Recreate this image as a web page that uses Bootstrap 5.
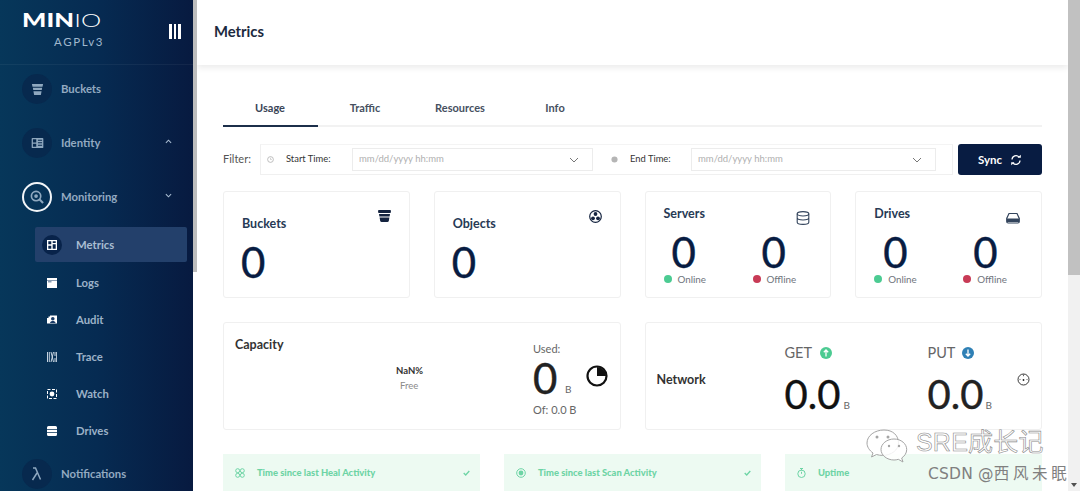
<!doctype html>
<html lang="en">
<head>
<meta charset="utf-8">
<title>MinIO Metrics</title>
<link href="https://cdn.jsdelivr.net/npm/bootstrap@5.3.0/dist/css/bootstrap.min.css" rel="stylesheet">
<style>
html,body{height:100%;overflow:hidden;background:#fff}
body{font-family:Lato,"Noto Sans",sans-serif;color:#081c42;-webkit-font-smoothing:antialiased}
.app-shell{width:1080px;height:491px;position:relative;overflow:hidden}
.side-pane{width:193px;flex:none;height:491px;background:linear-gradient(90deg,#06375a 0%,#062b52 50%,#071a40 100%);color:#9cb2c8;overflow:hidden}
.side-thumb{width:4px;flex:none;height:491px;background:linear-gradient(#bdbdbd 0 272px,#fff 272px)}
.brand-box{height:65px;position:relative;border-bottom:1px solid rgba(255,255,255,.05)}
.brand-word{position:absolute;left:22px;top:7px;font-size:18px;line-height:26px;color:#fff;font-weight:900;letter-spacing:.1px;transform:scaleX(1.42);transform-origin:left}
.brand-word span{font-weight:300}
.brand-sub{position:absolute;left:54px;top:34px;font-size:11.5px;line-height:16px;letter-spacing:1.6px;color:#a0b8ce}
.menu-bars{position:absolute;left:169px;top:24px;width:12px;height:15px;display:flex;gap:2px}
.menu-bars i{flex:1;background:#fff}
.menu-row{height:48px;margin-bottom:6px;padding-left:22px;font-size:11.3px;font-weight:700;position:relative;color:#93aac1}
.menu-disc{width:30px;height:30px;border-radius:50%;background:#07294e;margin-right:9px;flex:none}
.menu-disc.is-open{border:2px solid #f2f5f8;background:transparent}
.menu-chev{position:absolute;left:165px;top:19px}
.sub-list{margin-top:1px}
.sub-row{height:37px;padding:1px 0 0 47px;font-size:11.3px;font-weight:700;color:#9cb2c8}
.sub-row svg{margin-right:19px;flex:none}
.sub-active{height:35px;margin:0 6px 2px 35px;padding:1px 0 0 7px;background:#23406b;border-radius:2px;color:#a9bdd2;font-size:11.3px;font-weight:700}
.sub-active .sub-disc{width:20px;height:20px;border-radius:50%;background:#08234a;margin-right:14px}
.last-row{height:50px;margin:0}
.main-pane{flex:1;min-width:0;height:491px;overflow:hidden}
.top-strip{height:65px;padding:0 0 2px 17px;font-size:14.8px;font-weight:700;color:#1c2a3e;box-shadow:0 3px 6px rgba(0,0,0,.08)}
.content-box{padding:25px 26px 0;width:871px}
.tab-line{height:37px;border-bottom:2px solid #f2f2f2;margin-bottom:17px}
.tab-cell{width:95px;height:37px;text-align:center;font-size:11px;font-weight:700;line-height:35px;color:#46505f;padding-right:1px}
.tab-cell.is-on{border-bottom:2px solid #1c2f4a;color:#3a4557}
.filter-line{height:31px;margin-bottom:16px}
.filter-cap{width:37px;font-size:11px;color:#555}
.filter-box{width:693px;height:31px;border:1px solid #f0f0f0;border-top-color:#f4f4f4;font-size:9.4px;color:#333}
.time-start{width:91px;padding-left:6px}
.time-end{width:98px;padding-left:18px}
.time-field{height:23px;border:1px solid #ececec;padding:0 5px 0 6px;color:#b0b0b0;font-size:9.5px}
.field-a{width:241px}.field-b{width:245px}
.sync-btn{width:84px;height:31px;margin-left:5px;background:#081c42;color:#fff;font-size:11.5px;font-weight:700;border-radius:3px;border:0;padding:0}
.stat-tile{height:107px;border:1px solid #f0f0f0;border-radius:3px;position:relative;background:#fff}
.tile-tall{height:108px}
.tile-name{position:absolute;left:18px;top:24px;font-size:12.5px;font-weight:700;line-height:16px;color:#273a55}
.tile-mark{position:absolute}
.big-num{position:absolute;font-size:42px;line-height:40px;color:#081c42;-webkit-text-stroke:.4px currentColor}
.big-wide{font-size:40px}
.dot-key{position:absolute;font-size:9.8px;color:#6f747c;line-height:12px;white-space:nowrap;display:flex;align-items:center;gap:6px}
.dot-key i{width:8px;height:8px;border-radius:50%;display:block}
.dot-on{background:#4ccb92}.dot-off{background:#c83b56}
.plain-abs{position:absolute;line-height:1;white-space:nowrap}
.status-tile{height:60px;background:#edfaf2;color:#6dd4a5;font-size:9.4px;font-weight:700;padding:0 10px 22px 12px}
.status-tile svg{flex:none}
.status-tile b{margin-left:12px;flex:1}
.fake-scroll{width:12px;flex:none;height:491px;background:#f1f1f1;position:relative}
.fake-scroll::before{content:"";position:absolute;left:0;top:0;right:0;height:275px;background:#c1c1c1}
.fake-scroll::after{content:"";position:absolute;left:3px;bottom:4px;border:3px solid transparent;border-top:4px solid #505050;border-bottom:0}
.water-one{position:absolute;left:916px;top:426px;font-size:25px;line-height:32px;color:#fff;letter-spacing:.2px;font-family:"Liberation Sans","Noto Sans CJK SC",sans-serif;-webkit-text-stroke:.6px #8a8a8a;white-space:nowrap}
.water-two{position:absolute;left:928px;top:464px;font-size:15.5px;line-height:20px;color:#808080;font-family:"DejaVu Sans","Noto Sans CJK SC",sans-serif;white-space:nowrap;letter-spacing:.2px}
.water-two span{letter-spacing:3.6px}
.wechat-mark{position:absolute;left:865px;top:428px}
</style>
</head>
<body>
<div class="app-shell d-flex">
  <aside class="side-pane">
    <div class="brand-box">
      <div class="brand-word">MIN<span>IO</span></div>
      <div class="brand-sub">AGPLv3</div>
      <div class="menu-bars"><i></i><i></i><i></i></div>
    </div>
    <div class="menu-row d-flex align-items-center">
      <div class="menu-disc d-flex align-items-center justify-content-center"><svg width="13" height="13" viewBox="0 0 14 14"><path fill="#8fa8bf" d="M1 1h12l-.6 3H1.600zM2 5.200h10l-.4 2.400H2.400zM2.600 8.800h8.800L10.600 13H3.400z"/></svg></div>Buckets
    </div>
    <div class="menu-row d-flex align-items-center">
      <div class="menu-disc d-flex align-items-center justify-content-center"><svg width="13" height="10" viewBox="0 0 14 12"><path fill="#8fa8bf" d="M0 1a1 1 0 0 1 1-1h12a1 1 0 0 1 1 1v10a1 1 0 0 1-1 1H1a1 1 0 0 1-1-1zm1.500.500v4h4v-4zm0 5.500v3.500h4V7zm6-5v1.300H12.500V2zm0 3v1.300H12.500V5zm0 3v1.300H12.500V8z"/></svg></div>Identity
      <svg class="menu-chev" width="7" height="7" viewBox="0 0 8 8"><path d="M1 5.500 4 2.500l3 3" fill="none" stroke="#a9bdd2" stroke-width="1.200"/></svg>
    </div>
    <div class="menu-row d-flex align-items-center">
      <div class="menu-disc is-open d-flex align-items-center justify-content-center"><svg width="14" height="14" viewBox="0 0 15 15"><circle cx="6.500" cy="6.500" r="5" fill="none" stroke="#8fa8bf" stroke-width="1.800"/><path d="M10 10l4 4" stroke="#8fa8bf" stroke-width="2.200"/><circle cx="6.500" cy="6.500" r="2" fill="#8fa8bf"/></svg></div>Monitoring
      <svg class="menu-chev" width="7" height="7" viewBox="0 0 8 8"><path d="M1 2.500 4 5.500l3-3" fill="none" stroke="#a9bdd2" stroke-width="1.200"/></svg>
    </div>
    <div class="sub-list">
      <div class="sub-active d-flex align-items-center">
        <div class="sub-disc d-flex align-items-center justify-content-center"><svg width="10" height="10" viewBox="0 0 10 10"><path fill="#fff" d="M0 0h10v10H0zm1.300 1.300v3h3v-3zm4.400 0v1.700h3V1.300zm0 3v4.400h3V4.300zm-4.400 1.400v3h3v-3z"/></svg></div>Metrics
      </div>
      <div class="sub-row d-flex align-items-center"><svg width="10" height="10" viewBox="0 0 10 10"><path fill="#fff" d="M0 0h10v10H0z"/><path fill="#173a66" d="M0 2h10v.6H0zM1 3.500h3.500v.8H1z"/></svg>Logs</div>
      <div class="sub-row d-flex align-items-center"><svg width="10" height="10" viewBox="0 0 10 10"><path fill="#fff" d="M0 3h1.500V1.500H3V.5h7v8H0z"/><circle cx="5.800" cy="3.800" r="1.800" fill="#173a66"/><path d="M3 8c.3-1.500 1.500-2 2.800-2s2.500.5 2.800 2z" fill="#173a66"/></svg>Audit</div>
      <div class="sub-row d-flex align-items-center"><svg width="10" height="10" viewBox="0 0 10 10"><path stroke="#dbe5ef" stroke-width=".9" d="M.5 0v10M2.300 0v10M4 0l2.500 10M6.500 0 4 10M8 0v4M8 6v4M9.600 0v10"/></svg>Trace</div>
      <div class="sub-row d-flex align-items-center"><svg width="10" height="10" viewBox="0 0 10 10"><path fill="none" stroke="#fff" stroke-width="1" stroke-dasharray="3 1.500" d="M.5.500h9v9h-9z"/><circle cx="5" cy="5" r="2.400" fill="#fff"/></svg>Watch</div>
      <div class="sub-row d-flex align-items-center"><svg width="10" height="10" viewBox="0 0 10 10"><path fill="#fff" d="M1.500 0h7A1.500 1.500 0 0 1 10 1.500V3H0V1.500A1.500 1.500 0 0 1 1.500 0zM0 3.800h10v2.400H0zM0 7h10v1.500A1.500 1.500 0 0 1 8.500 10h-7A1.500 1.500 0 0 1 0 8.500z"/></svg>Drives</div>
    </div>
    <div class="menu-row last-row d-flex align-items-center">
      <div class="menu-disc d-flex align-items-center justify-content-center"><svg width="14" height="14" viewBox="0 0 14 14"><path d="M3 1h2.500l5 11.500M7 6 2.500 13" fill="none" stroke="#8fa8c0" stroke-width="1.500"/></svg></div>Notifications
    </div>
  </aside>
  <div class="side-thumb"></div>
  <main class="main-pane">
    <div class="top-strip d-flex align-items-center">Metrics</div>
    <div class="content-box">
      <div class="tab-line d-flex">
        <div class="tab-cell is-on">Usage</div>
        <div class="tab-cell">Traffic</div>
        <div class="tab-cell">Resources</div>
        <div class="tab-cell">Info</div>
      </div>
      <div class="filter-line d-flex align-items-center">
        <div class="filter-cap">Filter:</div>
        <div class="filter-box d-flex align-items-center">
          <div class="time-start d-flex align-items-center gap-2"><svg width="7" height="7" viewBox="0 0 8 8"><circle cx="4" cy="4" r="3.300" fill="none" stroke="#b5b5b5"/><path d="M4 2v2h1.500" fill="none" stroke="#b5b5b5" stroke-width=".7"/></svg><span class="ms-1">Start Time:</span></div>
          <div class="time-field field-a d-flex align-items-center justify-content-between">mm/dd/yyyy hh:mm<svg class="me-2" width="10" height="6" viewBox="0 0 10 6"><path d="M1 1l4 4 4-4" fill="none" stroke="#777" stroke-width="1"/></svg></div>
          <div class="time-end d-flex align-items-center gap-2"><svg width="7" height="7" viewBox="0 0 8 8"><circle cx="4" cy="4" r="3.500" fill="#b5b5b5"/></svg><span class="ms-1">End Time:</span></div>
          <div class="time-field field-b d-flex align-items-center justify-content-between">mm/dd/yyyy hh:mm<svg class="me-2" width="10" height="6" viewBox="0 0 10 6"><path d="M1 1l4 4 4-4" fill="none" stroke="#777" stroke-width="1"/></svg></div>
        </div>
        <button class="sync-btn btn d-flex align-items-center justify-content-center gap-2" type="button">Sync <svg width="12" height="12" viewBox="0 0 12 12"><path d="M2 5.500a4 4 0 0 1 7-2.500M10 6.500a4 4 0 0 1-7 2.500" fill="none" stroke="#fff" stroke-width="1.200"/><path d="M7.500 3.800h3.300V.8zM4.500 8.200H1.200v3z" fill="#fff"/></svg></button>
      </div>
      <div class="row g-4">
        <div class="col-3"><div class="stat-tile card">
          <div class="tile-name">Buckets</div>
          <svg class="tile-mark" style="left:154px;top:18px" width="13" height="13" viewBox="0 0 13 13"><path fill="#14233f" d="M0 1a1 1 0 0 1 1-1h11a1 1 0 0 1 1 1l-.4 2H.4zM1 4h11l-.4 2.500H1.400zM1.600 7.500h9.800L10.800 11a1.500 1.500 0 0 1-1.500 1H3.700a1.500 1.500 0 0 1-1.500-1z"/></svg>
          <div class="big-num" style="left:17px;top:50px">0</div>
        </div></div>
        <div class="col-3"><div class="stat-tile card">
          <div class="tile-name">Objects</div>
          <svg class="tile-mark" style="left:154px;top:18px" width="13" height="13" viewBox="0 0 13 13"><circle cx="6.500" cy="6.500" r="5.800" fill="none" stroke="#14233f" stroke-width="1.200"/><circle cx="6.500" cy="4" r="1.900" fill="#14233f"/><circle cx="4" cy="8.300" r="1.900" fill="#14233f"/><circle cx="9" cy="8.300" r="1.900" fill="#14233f"/></svg>
          <div class="big-num" style="left:17px;top:50px">0</div>
        </div></div>
        <div class="col-3"><div class="stat-tile card">
          <div class="tile-name" style="top:14px">Servers</div>
          <svg class="tile-mark" style="left:150px;top:19px" width="14" height="14" viewBox="0 0 14 14"><ellipse cx="7" cy="2.800" rx="5.800" ry="2.200" fill="none" stroke="#33445c" stroke-width="1.100"/><path d="M1.200 2.800v8.400c0 1.200 2.600 2.200 5.800 2.200s5.800-1 5.800-2.200V2.800M1.200 6.800c0 1.200 2.600 2.200 5.800 2.200s5.800-1 5.800-2.200" fill="none" stroke="#33445c" stroke-width="1.100"/></svg>
          <div class="big-num" style="left:26px;top:40px">0</div>
          <div class="big-num" style="left:116px;top:40px">0</div>
          <div class="dot-key" style="left:18px;top:81px"><i class="dot-on"></i>Online</div>
          <div class="dot-key" style="left:107px;top:81px"><i class="dot-off"></i>Offline</div>
        </div></div>
        <div class="col-3"><div class="stat-tile card">
          <div class="tile-name" style="top:14px">Drives</div>
          <svg class="tile-mark" style="left:150px;top:20px" width="14" height="12" viewBox="0 0 14 12"><path d="M3 1.500h8l2.300 5v3a1.500 1.500 0 0 1-1.500 1.500H2.200A1.500 1.500 0 0 1 .7 9.500v-3z" fill="none" stroke="#33445c" stroke-width="1.200"/><path d="M1 6.500h12v3.500H1z" fill="#33445c"/></svg>
          <div class="big-num" style="left:27px;top:40px">0</div>
          <div class="big-num" style="left:117px;top:40px">0</div>
          <div class="dot-key" style="left:18px;top:81px"><i class="dot-on"></i>Online</div>
          <div class="dot-key" style="left:107px;top:81px"><i class="dot-off"></i>Offline</div>
        </div></div>
        <div class="col-6"><div class="stat-tile tile-tall card">
          <div class="tile-name" style="left:11px;top:14px;color:#333">Capacity</div>
          <div class="plain-abs" style="left:172px;top:43px;font-size:9.500px;font-weight:700;color:#333">NaN%</div>
          <div class="plain-abs" style="left:176px;top:58px;font-size:9.500px;color:#8a8a8a">Free</div>
          <div class="plain-abs" style="left:309px;top:20px;font-size:11px;color:#666">Used:</div>
          <div class="big-num" style="left:309px;top:35px;color:#222">0</div>
          <div class="plain-abs" style="left:341px;top:61px;font-size:10px;color:#666">B</div>
          <div class="plain-abs" style="left:309px;top:81px;font-size:11px;color:#666">Of: 0.0 B</div>
          <svg class="tile-mark" style="left:362px;top:42px" width="22" height="22" viewBox="0 0 22 22"><circle cx="11" cy="11" r="9.500" fill="none" stroke="#111" stroke-width="2.200"/><path d="M11 11V2a9 9 0 0 1 9 9z" fill="#111"/></svg>
        </div></div>
        <div class="col-6"><div class="stat-tile tile-tall card">
          <div class="tile-name" style="left:11px;top:49px;color:#333">Network</div>
          <div class="plain-abs" style="left:139px;top:23px;font-size:14.500px;color:#666">GET</div>
          <svg class="tile-mark" style="left:174px;top:24px" width="12" height="12" viewBox="0 0 12 12"><circle cx="6" cy="6" r="6" fill="#4ccb92"/><path d="M6 9.500V3M3.800 5.200 6 3l2.200 2.200" fill="none" stroke="#fff" stroke-width="1.300"/></svg>
          <div class="plain-abs" style="left:282px;top:23px;font-size:14.500px;color:#666">PUT</div>
          <svg class="tile-mark" style="left:316px;top:24px" width="12" height="12" viewBox="0 0 12 12"><circle cx="6" cy="6" r="6" fill="#2f80b5"/><path d="M6 2.500V9M3.800 6.800 6 9l2.200-2.200" fill="none" stroke="#fff" stroke-width="1.300"/></svg>
          <div class="big-num big-wide" style="left:139px;top:51px;color:#111">0.0</div>
          <div class="plain-abs" style="left:198px;top:77px;font-size:10px;color:#666">B</div>
          <div class="big-num big-wide" style="left:282px;top:51px;color:#222">0.0</div>
          <div class="plain-abs" style="left:340px;top:77px;font-size:10px;color:#666">B</div>
          <svg class="tile-mark" style="left:371px;top:50px" width="13" height="13" viewBox="0 0 13 13"><circle cx="6.500" cy="6.500" r="5.500" fill="none" stroke="#222" stroke-width=".9"/><circle cx="6.500" cy="7" r=".9" fill="#222"/><path d="M6.500 1.500v1.700M2.500 6.500h1M9.500 6.500h1" stroke="#222" stroke-width=".7"/></svg>
        </div></div>
        <div class="col-4"><div class="status-tile d-flex align-items-center">
          <svg width="10" height="10" viewBox="0 0 10 10"><g fill="none" stroke="#6dd4a5" stroke-width="1"><circle cx="2.700" cy="2.700" r="2"/><circle cx="7.300" cy="2.700" r="2"/><circle cx="2.700" cy="7.300" r="2"/><circle cx="7.300" cy="7.300" r="2"/></g></svg>
          <b>Time since last Heal Activity</b>
          <svg width="7" height="6" viewBox="0 0 7 6"><path d="M.7 3l2 2L6.300 1" fill="none" stroke="#6dd4a5" stroke-width="1.300"/></svg>
        </div></div>
        <div class="col-4"><div class="status-tile d-flex align-items-center">
          <svg width="10" height="10" viewBox="0 0 10 10"><circle cx="5" cy="5" r="4.300" fill="none" stroke="#6dd4a5"/><circle cx="5" cy="5" r="2.400" fill="#6dd4a5"/></svg>
          <b>Time since last Scan Activity</b>
          <svg width="7" height="6" viewBox="0 0 7 6"><path d="M.7 3l2 2L6.300 1" fill="none" stroke="#6dd4a5" stroke-width="1.300"/></svg>
        </div></div>
        <div class="col-4"><div class="status-tile d-flex align-items-center">
          <svg width="9" height="10" viewBox="0 0 9 10"><circle cx="4.500" cy="5.800" r="3.700" fill="none" stroke="#6dd4a5"/><path d="M3 .5h3M4.500 1v1.500M4.500 5.800V3.800" stroke="#6dd4a5"/></svg>
          <b>Uptime</b>
        </div></div>
      </div>
    </div>
  </main>
  <div class="fake-scroll"></div>
  <svg class="wechat-mark" width="44" height="40" viewBox="0 0 44 40"><g fill="rgba(255,255,255,.85)" stroke="#a5a5a5" stroke-width="1"><path d="M19 2c-9 0-17 5.500-17 13 0 4 2.500 7.500 6 10l-1.500 4 5-2.500c2 .6 4 .9 6 .9 9 0 16-5.500 16-12.400C33.500 7.500 28 2 19 2z"/><path d="M29 11c-7 0-13 4.700-13 10.500S22 32 29 32c1.500 0 3-.2 4.300-.7l4.700 2.700-1.300-4c3-2 5-5 5-8.500C41.700 15.700 36 11 29 11z"/></g><g fill="#a5a5a5"><circle cx="12" cy="9" r="1.500"/><circle cx="23" cy="9" r="1.500"/><circle cx="24" cy="18" r="1.200"/><circle cx="34" cy="18" r="1.200"/></g></svg>
  <div class="water-one">SRE成长记</div>
  <div class="water-two">CSDN @<span>西风未眠</span></div>
</div>
</body>
</html>
